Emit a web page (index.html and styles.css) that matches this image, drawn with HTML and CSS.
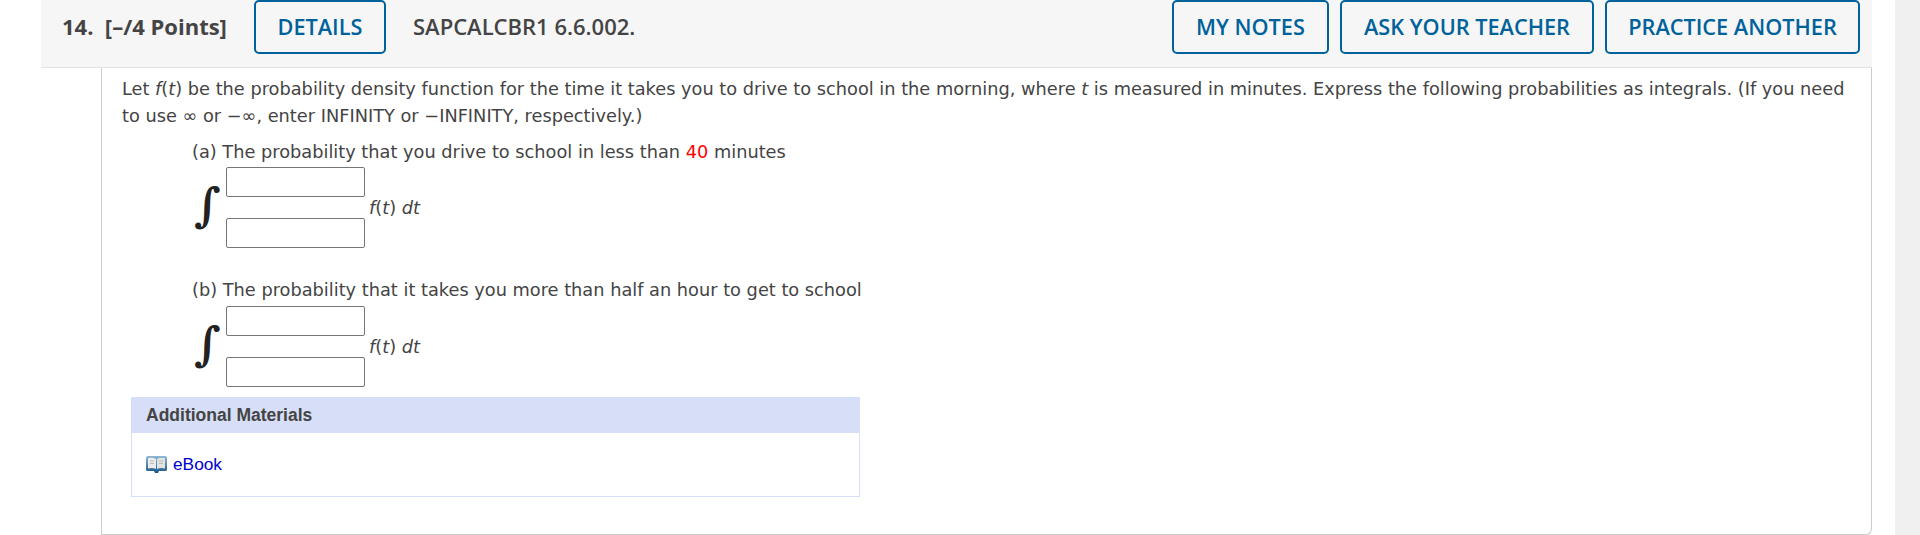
FILE: index.html
```html
<!DOCTYPE html>
<html lang="en">

<head>
    <meta charset="UTF-8">
    <title>Question 14</title>
    <link rel="stylesheet" href="styles.css">
</head>

<body>
    <div class="page">
        <div class="main">
            <div class="qHead">
                <span class="points">14.&nbsp; [&ndash;/4 Points]</span>
                <button class="btn details">DETAILS</button>
                <span class="code">SAPCALCBR1 6.6.002.</span>
                <div class="actions">
                    <button class="btn notes">MY NOTES</button>
                    <button class="btn teacher">ASK YOUR TEACHER</button>
                    <button class="btn practice">PRACTICE ANOTHER</button>
                </div>
            </div>

            <div class="qBody">
                <p class="intro">Let <i>f</i>(<i>t</i>) be the probability density function for the time it takes you to drive to school in the morning, where <i>t</i> is measured in minutes. Express the following probabilities as integrals. (If you need to use &infin; or &minus;&infin;, enter INFINITY or &minus;INFINITY, respectively.)</p>

                <div class="part">
                    <p class="partText">(a) The probability that you drive to school in less than <span class="red">40</span> minutes</p>
                    <div class="integral">
                        <span class="intSign">&int;</span>
                        <div class="limits">
                            <input type="text" class="limit">
                            <input type="text" class="limit">
                        </div>
                        <span class="fdt"><i>f</i>(<i>t</i>) <i>dt</i></span>
                    </div>
                </div>

                <div class="part partB">
                    <p class="partText">(b) The probability that it takes you more than half an hour to get to school</p>
                    <div class="integral">
                        <span class="intSign">&int;</span>
                        <div class="limits">
                            <input type="text" class="limit">
                            <input type="text" class="limit">
                        </div>
                        <span class="fdt"><i>f</i>(<i>t</i>) <i>dt</i></span>
                    </div>
                </div>

                <div class="materials">
                    <div class="matHead">Additional Materials</div>
                    <div class="matBody">
                        <svg class="bookIcon" width="23" height="19" viewBox="0 0 23 19">
                            <defs>
                                <linearGradient id="cover" x1="0" y1="0" x2="0" y2="1">
                                    <stop offset="0" stop-color="#8db8d4"/>
                                    <stop offset="1" stop-color="#1c5686"/>
                                </linearGradient>
                            </defs>
                            <path d="M1 3 Q1 1 3 1 H20 Q22 1 22 3 V15 Q22 16 20 16 H14 L13 18 H10 L9 16 H3 Q1 16 1 15 Z" fill="url(#cover)"/>
                            <path d="M3 3 Q8 2 11 4 V14 Q8 12.5 3 13.5 Z" fill="#ececec"/>
                            <path d="M20 3 Q15 2 12 4 V14 Q15 12.5 20 13.5 Z" fill="#e2e2e2"/>
                            <path d="M5 6 H9 M5 8.5 H9 M14 6 H18 M14 8.5 H18" stroke="#bbb" stroke-width="1"/>
                        </svg>
                        <a class="ebook" href="#">eBook</a>
                    </div>
                </div>
            </div>
        </div>
        <div class="scrollTrack"></div>
    </div>
</body>

</html>
```

FILE: styles.css
```css
body {
    margin: 0;
    background-color: #fff;
    font-family: 'DejaVu Sans', Verdana, sans-serif;
    color: #444;
}

.page {
    display: flex;
    height: 535px;
    overflow: hidden;
}

.main {
    flex: 1;
    padding-left: 41px;
    padding-right: 23px;
}

.scrollTrack {
    width: 25px;
    background-color: #f0f0f0;
}

.qHead {
    display: flex;
    align-items: flex-start;
    height: 67px;
    padding: 0 12px 0 21px;
    background-color: #f6f6f6;
    border-bottom: 1px solid #e2e2e2;
    font-family: 'Open Sans', sans-serif;
    font-weight: 600;
    font-size: 22px;
    color: #444;
}

.points {
    width: 192px;
    font-weight: 700;
    line-height: 52px;
    white-space: nowrap;
}

.code {
    margin-left: 27px;
    line-height: 52px;
}

.actions {
    display: flex;
    gap: 11px;
    margin-left: auto;
}

.btn {
    height: 54px;
    padding: 0 0 2px;
    background-color: #f6f6f6;
    border: 2px solid #00629b;
    border-radius: 5px;
    font-family: 'Open Sans', sans-serif;
    font-weight: 600;
    font-size: 21.7px;
    color: #00629b;
}

.details {
    width: 132px;
}

.notes {
    width: 157px;
}

.teacher {
    width: 254px;
}

.practice {
    width: 255px;
}

.qBody {
    height: 467px;
    margin-left: 60px;
    padding: 8px 0 0 20px;
    border-left: 1px solid #ccc;
    border-right: 1px solid #ccc;
    border-bottom: 1px solid #ccc;
    border-bottom-right-radius: 6px;
    font-size: 17.75px;
    line-height: 27px;
    box-sizing: border-box;
}

.intro {
    margin: 0 20px 0 0;
}

.part {
    padding-left: 71px;
}

.partB {
    margin-top: 30px;
}

.partText {
    margin: 9px 0 0;
    margin-left: -1px;
    line-height: 27px;
}

.partB .partText {
    margin-top: 0;
}

.partB .integral {
    margin-top: 2px;
}

.red {
    color: #f00;
}

.integral {
    display: flex;
    align-items: center;
    height: 80px;
    margin-top: 1px;
}

.intSign {
    width: 32px;
    padding-left: 1px;
    margin-bottom: 4px;
    font-family: 'DejaVu Serif', serif;
    font-size: 46px;
    font-weight: bold;
    line-height: 44px;
    color: #222;
}

.limits {
    display: flex;
    flex-direction: column;
    gap: 21px;
}

.limit {
    width: 139px;
    height: 30px;
    margin: 0;
    padding: 0;
    box-sizing: border-box;
    background-color: #fff;
    border: 1px solid #767676;
    border-radius: 2px;
}

.fdt {
    margin-left: 4px;
    padding-top: 3px;
    font-size: 17.75px;
}

.materials {
    width: 727px;
    height: 99px;
    margin: 11px 0 0 9px;
    border-left: 1px solid #d6dff7;
    border-right: 1px solid #d6dff7;
    border-bottom: 1px solid #d6dff7;
    font-family: 'Liberation Sans', Arial, sans-serif;
}

.matHead {
    height: 36px;
    padding-left: 14px;
    background-color: #d6dff7;
    font-weight: bold;
    font-size: 17.5px;
    line-height: 36px;
    color: #444;
}

.matBody {
    display: flex;
    align-items: center;
    gap: 5px;
    height: 63px;
    padding-left: 13px;
}

.ebook {
    color: #0000cc;
    font-size: 17.3px;
    text-decoration: none;
}
```
